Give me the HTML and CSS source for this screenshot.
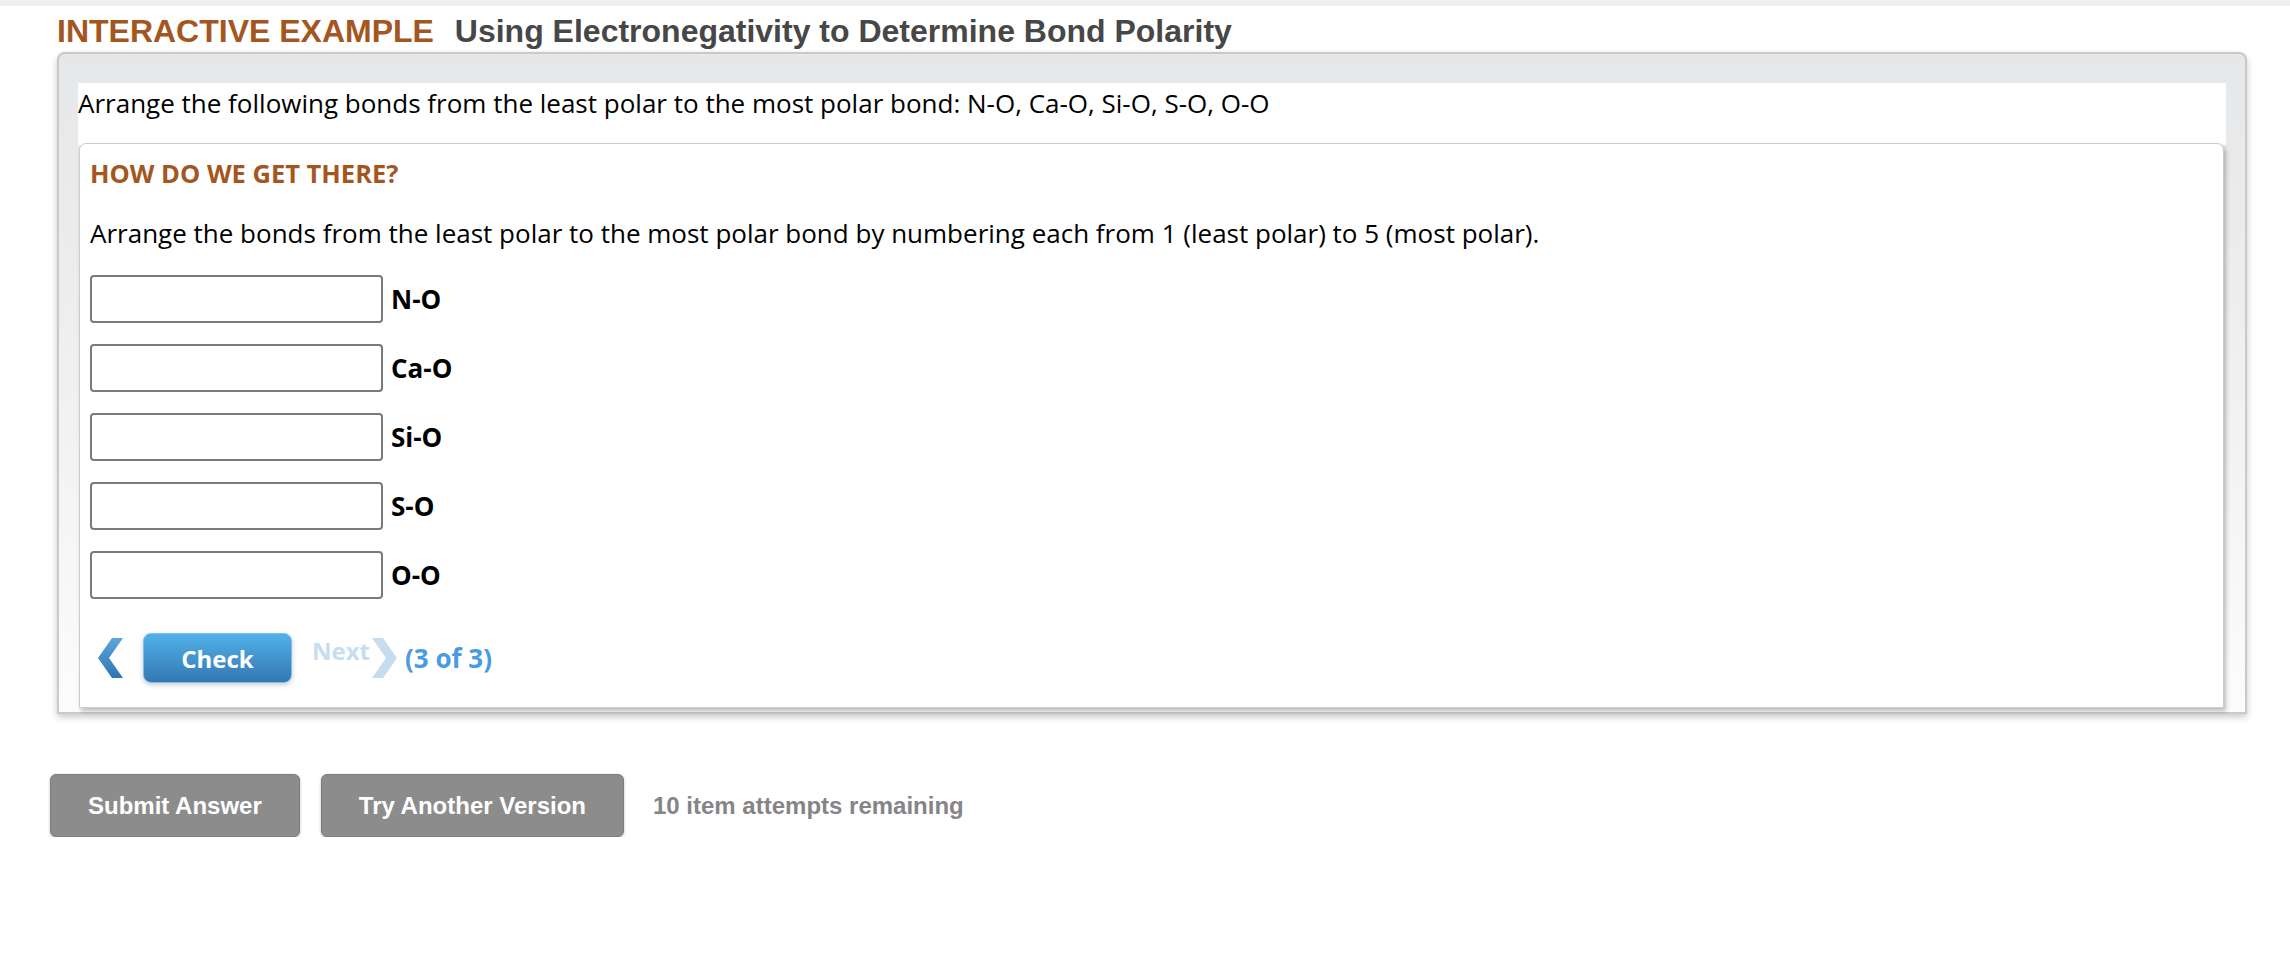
FILE: index.html
```html
<!DOCTYPE html>
<html lang="en">
  <head>
    <meta charset="UTF-8" />
    <title>Interactive Example</title>
    <link rel="stylesheet" href="styles.css">
  </head>
  <body>
    <div class="topbar"></div>

    <div class="page">
      <h1 class="title">
        <span class="tag">INTERACTIVE EXAMPLE</span>
        <span class="name">Using Electronegativity to Determine Bond Polarity</span>
      </h1>

      <div class="panel">
        <p class="question">
          Arrange the following bonds from the least polar to the most polar bond: N-O, Ca-O, Si-O, S-O, O-O
        </p>

        <div class="card">
          <h2 class="card-head">HOW DO WE GET THERE?</h2>
          <p class="prompt">
            Arrange the bonds from the least polar to the most polar bond by numbering each from 1 (least polar) to 5 (most polar).
          </p>

          <ul class="bonds">
            <li><input type="text" /><span>N-O</span></li>
            <li><input type="text" /><span>Ca-O</span></li>
            <li><input type="text" /><span>Si-O</span></li>
            <li><input type="text" /><span>S-O</span></li>
            <li><input type="text" /><span>O-O</span></li>
          </ul>

          <div class="steps">
            <svg class="chev prev" width="25" height="40" viewBox="0 0 25 40">
              <defs>
                <linearGradient id="blue" x1="0" y1="0" x2="0" y2="1">
                  <stop offset="0" stop-color="#5aa6dc" />
                  <stop offset="1" stop-color="#2f76b3" />
                </linearGradient>
              </defs>
              <polygon points="14,0 25,0 11,20 25,40 14,40 0,20" fill="url(#blue)" />
            </svg>
            <button class="check">Check</button>
            <span class="next">Next</span>
            <svg class="chev next-chev" width="25" height="40" viewBox="0 0 25 40">
              <polygon points="0,0 11,0 25,20 11,40 0,40 14,20" fill="#c6ddf0" />
            </svg>
            <span class="count">(3 of 3)</span>
          </div>
        </div>
      </div>

      <div class="actions">
        <button class="grey-btn">Submit Answer</button>
        <button class="grey-btn">Try Another Version</button>
        <span class="attempts">10 item attempts remaining</span>
      </div>
    </div>
  </body>
</html>
```

FILE: styles.css
```css
body {
  margin: 0;
  background: #fff;
  font-family: "Open Sans", sans-serif;
  color: #000;
}

.topbar {
  height: 6px;
  background: #efefef;
}

.page {
  margin: 0 43px 0 57px;
}

.title {
  margin: 7px 0 3px;
  font-family: "Liberation Sans", Arial, sans-serif;
  font-size: 32px;
  line-height: 36px;
  font-weight: bold;
  white-space: nowrap;
}

.title .tag {
  color: #a4561f;
}

.title .name {
  color: #474747;
  margin-left: 12px;
}

.panel {
  border: 2px solid #c9c9c9;
  border-radius: 8px 8px 0 0;
  padding: 29px 19px 4px;
  background: linear-gradient(#e6e7e8 0%, #eeeeef 40%, #fcfcfc 100%);
  box-shadow: 0 3px 7px rgba(0, 0, 0, 0.22);
}

.question {
  margin: 0;
  padding: 2px 0 24px;
  background: #fff;
  font-size: 26px;
  line-height: 36px;
}

.card {
  margin: -2px 2px 0 1px;
  padding: 13px 10px 24px;
  background: #fff;
  border: 1px solid #cccccc;
  border-radius: 7px 7px 0 0;
  box-shadow: 2px 3px 4px rgba(0, 0, 0, 0.25);
}

.card-head {
  margin: 0;
  color: #a4561f;
  font-size: 25.5px;
  line-height: 33px;
  font-weight: bold;
}

.prompt {
  margin: 25px 0 0;
  font-size: 26px;
  line-height: 36px;
}

.bonds {
  list-style: none;
  margin: 24px 0 0;
  padding: 0;
  display: flex;
  flex-direction: column;
  gap: 21px;
}

.bonds li {
  display: flex;
  align-items: center;
  height: 48px;
}

.bonds input {
  box-sizing: border-box;
  width: 293px;
  height: 48px;
  border: 2px solid #7a7a7a;
  border-radius: 4px;
  background: #fff;
  margin: 0;
}

.bonds span {
  margin-left: 8px;
  font-size: 26px;
  font-weight: bold;
}

.steps {
  margin-top: 34px;
  display: flex;
  align-items: center;
  height: 50px;
}

.chev {
  display: block;
}

.prev {
  margin-left: 8px;
}

.check {
  margin-left: 20px;
  width: 149px;
  height: 50px;
  border: 1px solid #7cbfec;
  border-radius: 8px;
  background: linear-gradient(#52b1e9, #3478b2);
  color: #fff;
  font-family: "Open Sans", sans-serif;
  font-size: 24px;
  font-weight: bold;
  box-shadow: 0 2px 5px rgba(0, 0, 0, 0.2);
  cursor: pointer;
}

.next {
  margin-left: 20px;
  padding-bottom: 16px;
  color: #c6ddf0;
  font-size: 24px;
  font-weight: bold;
}

.next-chev {
  margin-left: 2px;
}

.count {
  margin-left: 8px;
  color: #4a9be0;
  font-size: 26px;
  font-weight: bold;
}

.actions {
  margin: 60px 0 0 -7px;
  display: flex;
  align-items: center;
}

.grey-btn {
  height: 63px;
  padding: 0 37px;
  margin-right: 21px;
  border: 1px solid #7d7d7d;
  border-radius: 6px;
  background: #8c8c8c;
  color: #fff;
  font-family: "Liberation Sans", Arial, sans-serif;
  font-size: 24px;
  font-weight: bold;
  box-shadow: 0 1px 3px rgba(0, 0, 0, 0.25);
  cursor: pointer;
}

.attempts {
  margin-left: 8px;
  color: #858585;
  font-family: "Liberation Sans", Arial, sans-serif;
  font-size: 24px;
  font-weight: bold;
}
```
